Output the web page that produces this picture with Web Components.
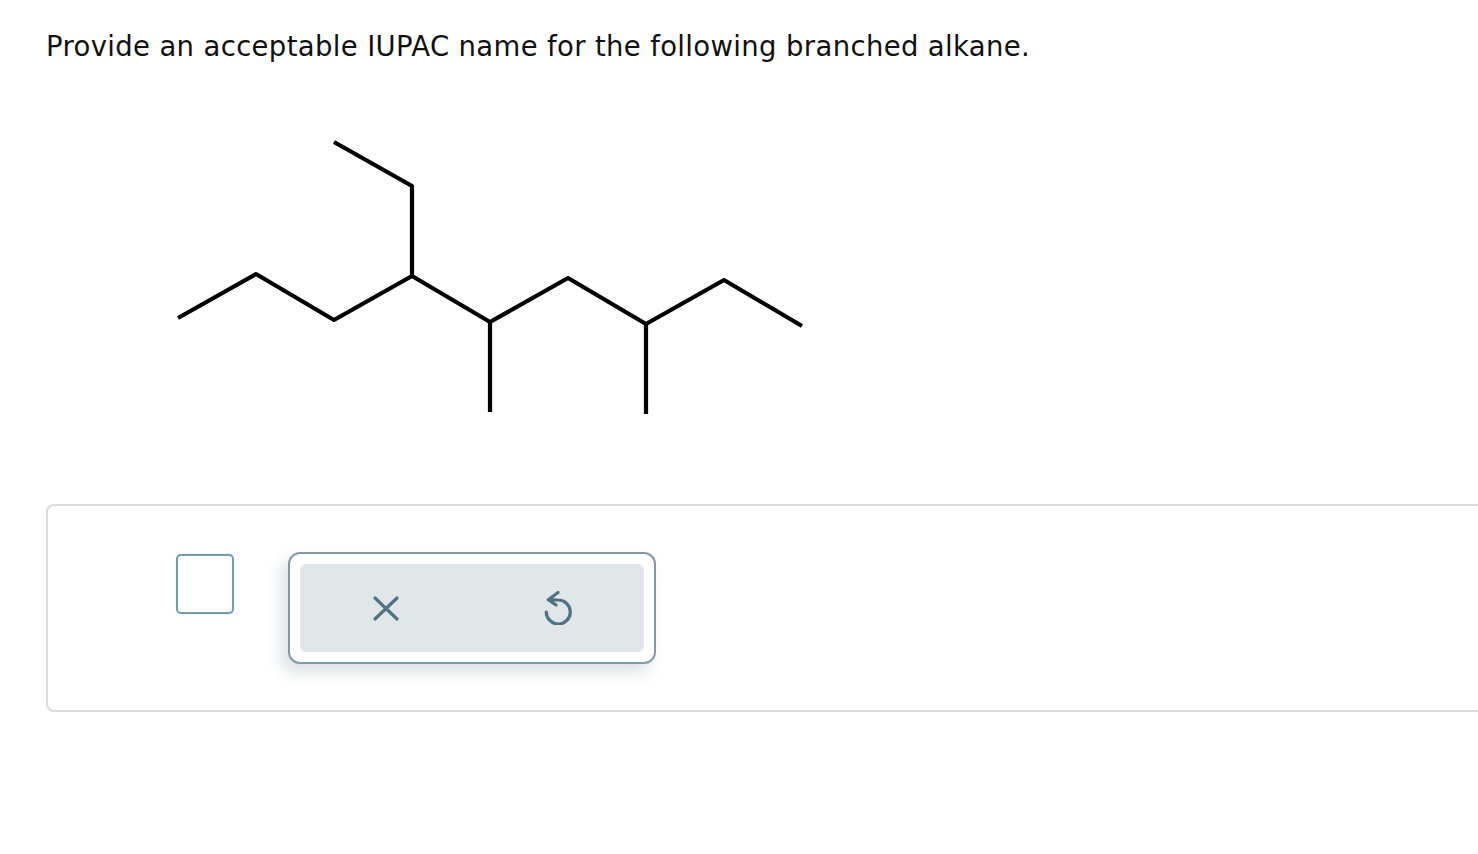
<!DOCTYPE html>
<html>
<head>
<meta charset="utf-8">
<title>Question</title>
<style>
html, body { margin: 0; height: 100%; background: #fff; overflow: hidden; }
question-page { width: 1478px; height: 854px; }
</style>
</head>
<body>
<question-page>
  <question-prompt>Provide an acceptable IUPAC name for the following branched alkane.</question-prompt>
  <alkane-figure></alkane-figure>
  <answer-panel>
    <answer-box></answer-box>
    <tool-palette></tool-palette>
  </answer-panel>
</question-page>
<script>
class QuestionPage extends HTMLElement {
    constructor() {
        super();
        this.attachShadow({ mode: "open" });
        this.shadowRoot.innerHTML = `
            <style>
                :host { display: block; box-sizing: border-box; padding: 29px 0 0 46px; }
            </style>
            <slot></slot>
        `;
    }
}

class QuestionPrompt extends HTMLElement {
    constructor() {
        super();
        this.attachShadow({ mode: "open" });
        this.shadowRoot.innerHTML = `
            <style>
                :host {
                    display: block;
                    font: 27.5px/34px "DejaVu Sans", Verdana, sans-serif;
                    letter-spacing: .345px;
                    color: #111;
                    white-space: nowrap;
                }
            </style>
            <slot></slot>
        `;
    }
}

class AlkaneFigure extends HTMLElement {
    constructor() {
        super();
        this.attachShadow({ mode: "open" });
        this.shadowRoot.innerHTML = `
            <style>
                :host { display: block; width: 800px; height: 441px; }
                svg { display: block; }
                path { fill: none; stroke: #000; stroke-width: 4.2; stroke-linejoin: round; }
            </style>
            <svg width="800" height="441" viewBox="46 63 800 441">
                <path d="M178 318 L256 274 L334 320 L412 276 L490 322 L568 278 L646 324 L724 280 L802 326"/>
                <path d="M334 142 L412 186 L412 276"/>
                <path d="M490 322 L490 412"/>
                <path d="M646 324 L646 414"/>
            </svg>
        `;
    }
}

class AnswerPanel extends HTMLElement {
    constructor() {
        super();
        this.attachShadow({ mode: "open" });
        this.shadowRoot.innerHTML = `
            <style>
                :host {
                    display: flex;
                    align-items: flex-start;
                    gap: 54px;
                    box-sizing: border-box;
                    width: 1500px;
                    height: 208px;
                    padding: 46px 0 0 128px;
                    border: 2px solid #d9dcdd;
                    border-radius: 8px;
                }
            </style>
            <slot></slot>
        `;
    }
}

class AnswerBox extends HTMLElement {
    constructor() {
        super();
        this.attachShadow({ mode: "open" });
        this.shadowRoot.innerHTML = `
            <style>
                :host {
                    display: block;
                    box-sizing: border-box;
                    width: 58px;
                    height: 60px;
                    margin-top: 2px;
                    border: 2.5px solid #6f9fae;
                    border-radius: 5px;
                    box-shadow: 0 0 1px #8fb5c2;
                }
            </style>
        `;
    }
}

class ToolPalette extends HTMLElement {
    constructor() {
        super();
        this.attachShadow({ mode: "open" });
        this.shadowRoot.innerHTML = `
            <style>
                :host {
                    display: block;
                    box-sizing: border-box;
                    width: 368px;
                    height: 112px;
                    padding: 10px;
                    background: #fff;
                    border: 2px solid #7f9aa5;
                    border-radius: 12px;
                    box-shadow: -6px 8px 16px rgba(70, 100, 115, .2);
                }
                .inner {
                    display: grid;
                    grid-template-columns: 172px 172px;
                    height: 88px;
                    background: #e1e6e8;
                    border-radius: 6px;
                }
                button {
                    display: flex;
                    align-items: center;
                    justify-content: center;
                    padding: 0;
                    border: 0;
                    background: none;
                }
                svg { display: block; fill: none; stroke: #4f7380; stroke-width: 3.2; stroke-linecap: round; stroke-linejoin: round; }
            </style>
            <div class="inner">
                <button aria-label="Clear">
                    <svg width="28" height="28" viewBox="0 0 28 28"><path d="M3 4 L25 25 M25 4 L3 25"/></svg>
                </button>
                <button aria-label="Undo">
                    <svg width="28" height="34" viewBox="0 0 28 34"><path d="M4.3 8.7 L14.3 9 A12 12 0 1 1 2.3 21 M14 1.5 L4.3 8.7 L12 14"/></svg>
                </button>
            </div>
        `;
    }
}

customElements.define("question-page", QuestionPage);
customElements.define("question-prompt", QuestionPrompt);
customElements.define("alkane-figure", AlkaneFigure);
customElements.define("answer-panel", AnswerPanel);
customElements.define("answer-box", AnswerBox);
customElements.define("tool-palette", ToolPalette);
</script>
</body>
</html>
